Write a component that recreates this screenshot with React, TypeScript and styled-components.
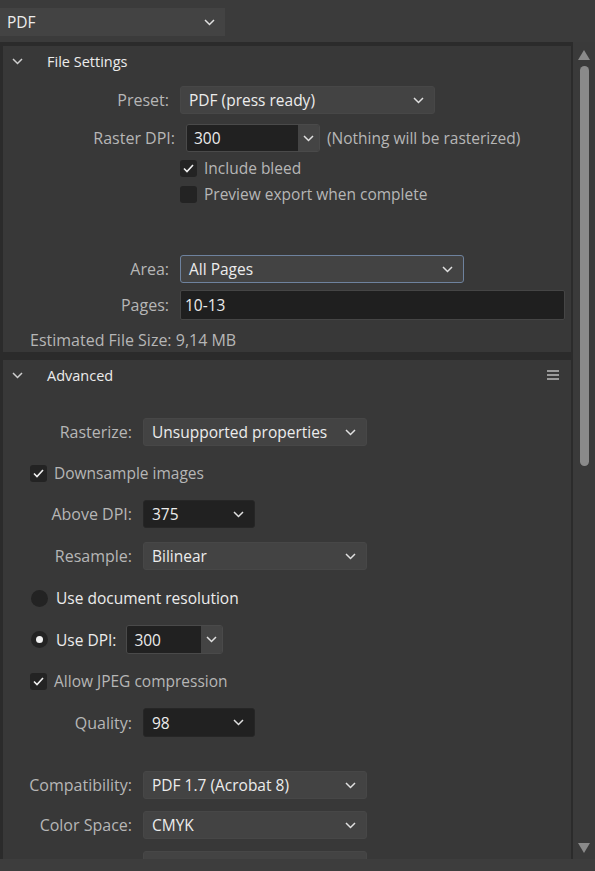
import React from "react";
import styled, { createGlobalStyle } from "styled-components";

const GlobalStyle = createGlobalStyle`
  html, body {
    margin: 0;
    padding: 0;
    background: #2b2b2b;
  }
  body {
    font-family: "Open Sans", "Noto Sans", sans-serif;
    color: #e4e4e4;
  }
`;

const Page = styled.div`
  width: 595px;
  height: 871px;
  display: flex;
  flex-direction: column;
  overflow: hidden;
  background: #2b2b2b;
`;

const TopBar = styled.div`
  height: 42px;
  flex: none;
  background: #3b3b3b;
  display: flex;
  align-items: center;
`;

const Body = styled.div`
  flex: 1;
  display: flex;
  min-height: 0;
`;

const Content = styled.div`
  flex: 1;
  display: flex;
  flex-direction: column;
  gap: 8px;
  padding: 4px 2px 0 3px;
  overflow: hidden;
`;

const Scrollbar = styled.div`
  width: 22px;
  flex: none;
  background: #3a3a3a;
  display: flex;
  flex-direction: column;
  align-items: center;
  padding: 8px 0 6px;
  box-sizing: border-box;
`;

const Thumb = styled.div`
  width: 9px;
  height: 400px;
  margin-top: 6px;
  border-radius: 5px;
  background: #8a8a8a;
`;

const Arrow = styled.div<{ $down?: boolean }>`
  width: 0;
  height: 0;
  border-left: 6px solid transparent;
  border-right: 6px solid transparent;
  ${(p) =>
    p.$down
      ? "border-top: 10px solid #8a8a8a;"
      : "border-bottom: 10px solid #8a8a8a;"}
  margin-top: ${(p) => (p.$down ? "auto" : "0")};
`;

const BottomStrip = styled.div`
  height: 12px;
  flex: none;
  background: #3d3d3d;
`;

const Panel = styled.section<{ $pb?: number }>`
  background: #383838;
  flex: none;
  display: flex;
  flex-direction: column;
  padding-bottom: ${(p) => p.$pb ?? 0}px;
`;

const Header = styled.div`
  height: 30px;
  display: flex;
  align-items: center;
  padding: 0 12px 0 9px;
  font-size: 14.5px;
  color: #ececec;
`;

const HeaderTitle = styled.span`
  margin-left: 24px;
  flex: 1;
`;

const Row = styled.div<{ $h: number; $mt: number }>`
  display: flex;
  align-items: center;
  height: ${(p) => p.$h}px;
  margin-top: ${(p) => p.$mt}px;
`;

const Label = styled.span<{ $w: number }>`
  width: ${(p) => p.$w}px;
  flex: none;
  text-align: right;
  padding-right: 11px;
  box-sizing: border-box;
  font-size: 16px;
  color: #b6b6b6;
`;

const Select = styled.div<{ $w: number; $dark?: boolean; $focus?: boolean }>`
  width: ${(p) => p.$w}px;
  height: 100%;
  box-sizing: border-box;
  display: flex;
  align-items: center;
  padding: 0 10px 0 8px;
  border-radius: 3px;
  background: ${(p) => (p.$dark ? "#212121" : "#434343")};
  border: 1px solid ${(p) => (p.$focus ? "#6e829e" : p.$dark ? "#262626" : "#474747")};
  font-size: 15.5px;
  color: #ececec;
  span {
    flex: 1;
  }
`;

const SplitSelect = styled.div<{ $w: number }>`
  width: ${(p) => p.$w}px;
  height: 100%;
  box-sizing: border-box;
  display: flex;
  border-radius: 3px;
  overflow: hidden;
  border: 1px solid #4a4a4a;
  font-size: 15.5px;
  color: #ececec;
`;

const SplitValue = styled.div`
  flex: 1;
  display: flex;
  align-items: center;
  padding-left: 7px;
  background: #212121;
`;

const SplitButton = styled.div`
  width: 21px;
  display: flex;
  align-items: center;
  justify-content: center;
  background: #444444;
`;

const Input = styled.div<{ $w: number }>`
  width: ${(p) => p.$w}px;
  height: 100%;
  box-sizing: border-box;
  display: flex;
  align-items: center;
  padding-left: 4px;
  border-radius: 2px;
  background: #1f1f1f;
  border: 1px solid #454545;
  font-size: 15.5px;
  color: #ececec;
`;

const Note = styled.span`
  margin-left: 7px;
  font-size: 15.5px;
  color: #b6b6b6;
`;

const Check = styled.div`
  width: 17px;
  height: 17px;
  flex: none;
  border-radius: 3px;
  background: #232323;
  display: flex;
  align-items: center;
  justify-content: center;
`;

const Radio = styled.div`
  width: 17px;
  height: 17px;
  flex: none;
  border-radius: 50%;
  background: #232323;
  display: flex;
  align-items: center;
  justify-content: center;
`;

const Dot = styled.div`
  width: 7px;
  height: 7px;
  border-radius: 50%;
  background: #f2f2f2;
`;

const OptionText = styled.span<{ $bright?: boolean }>`
  margin-left: ${(p) => (p.$bright ? 8 : 7)}px;
  font-size: 15.5px;
  color: ${(p) => (p.$bright ? "#ececec" : "#b6b6b6")};
`;

const Indent = styled.div<{ $w: number }>`
  width: ${(p) => p.$w}px;
  flex: none;
`;

const Info = styled.div`
  height: 20px;
  margin-top: 10px;
  padding-left: 27px;
  display: flex;
  align-items: center;
  font-size: 16px;
  color: #b6b6b6;
`;

const TopSelect = styled.div`
  width: 225px;
  height: 28px;
  background: #434343;
  display: flex;
  align-items: center;
  padding: 0 10px 0 7px;
  box-sizing: border-box;
  margin-top: 2px;
  font-size: 15.5px;
  color: #ececec;
  span {
    flex: 1;
  }
`;

const Chevron = ({ color = "#e0e0e0" }: { color?: string }) => (
  <svg width="11" height="7" viewBox="0 0 11 7">
    <polyline points="1,1 5.5,5.5 10,1" fill="none" stroke={color} strokeWidth="1.5" />
  </svg>
);

const Tick = () => (
  <svg width="11" height="9" viewBox="0 0 11 9">
    <polyline points="1,4.5 4,7.5 10,1" fill="none" stroke="#f0f0f0" strokeWidth="1.6" />
  </svg>
);

const Menu = () => (
  <svg width="12" height="12" viewBox="0 0 12 12">
    <rect x="0" y="1" width="12" height="2" fill="#9a9a9a" />
    <rect x="0" y="5" width="12" height="2" fill="#9a9a9a" />
    <rect x="0" y="9" width="12" height="2" fill="#9a9a9a" />
  </svg>
);

const FS = 177;
const AD = 140;

const App = () => {
  return (
    <Page>
      <GlobalStyle />
      <TopBar>
        <TopSelect>
          <span>PDF</span>
          <Chevron />
        </TopSelect>
      </TopBar>
      <Body>
        <Content>
          <Panel $pb={2}>
            <Header>
              <Chevron color="#cfcfcf" />
              <HeaderTitle>File Settings</HeaderTitle>
            </Header>
            <Row $h={28} $mt={10}>
              <Label $w={FS}>Preset:</Label>
              <Select $w={255}>
                <span>PDF (press ready)</span>
                <Chevron />
              </Select>
            </Row>
            <Row $h={28} $mt={10}>
              <Label $w={FS + 6}>Raster DPI:</Label>
              <SplitSelect $w={134}>
                <SplitValue>300</SplitValue>
                <SplitButton>
                  <Chevron />
                </SplitButton>
              </SplitSelect>
              <Note>(Nothing will be rasterized)</Note>
            </Row>
            <Row $h={20} $mt={6}>
              <Indent $w={FS} />
              <Check>
                <Tick />
              </Check>
              <OptionText>Include bleed</OptionText>
            </Row>
            <Row $h={20} $mt={6}>
              <Indent $w={FS} />
              <Check />
              <OptionText>Preview export when complete</OptionText>
            </Row>
            <Row $h={28} $mt={51}>
              <Label $w={FS}>Area:</Label>
              <Select $w={284} $focus>
                <span>All Pages</span>
                <Chevron />
              </Select>
            </Row>
            <Row $h={30} $mt={7}>
              <Label $w={FS}>Pages:</Label>
              <Input $w={385}>10-13</Input>
            </Row>
            <Info>Estimated File Size: 9,14 MB</Info>
          </Panel>
          <Panel>
            <Header>
              <Chevron color="#cfcfcf" />
              <HeaderTitle>Advanced</HeaderTitle>
              <Menu />
            </Header>
            <Row $h={28} $mt={28}>
              <Label $w={AD}>Rasterize:</Label>
              <Select $w={224}>
                <span>Unsupported properties</span>
                <Chevron />
              </Select>
            </Row>
            <Row $h={20} $mt={17}>
              <Indent $w={27} />
              <Check>
                <Tick />
              </Check>
              <OptionText>Downsample images</OptionText>
            </Row>
            <Row $h={28} $mt={17}>
              <Label $w={AD}>Above DPI:</Label>
              <Select $w={112} $dark>
                <span>375</span>
                <Chevron />
              </Select>
            </Row>
            <Row $h={28} $mt={14}>
              <Label $w={AD}>Resample:</Label>
              <Select $w={224}>
                <span>Bilinear</span>
                <Chevron />
              </Select>
            </Row>
            <Row $h={20} $mt={18}>
              <Indent $w={28} />
              <Radio />
              <OptionText $bright>Use document resolution</OptionText>
            </Row>
            <Row $h={29} $mt={17}>
              <Indent $w={28} />
              <Radio>
                <Dot />
              </Radio>
              <OptionText $bright>Use DPI:</OptionText>
              <Indent $w={10} />
              <SplitSelect $w={97}>
                <SplitValue>300</SplitValue>
                <SplitButton>
                  <Chevron />
                </SplitButton>
              </SplitSelect>
            </Row>
            <Row $h={20} $mt={17}>
              <Indent $w={27} />
              <Check>
                <Tick />
              </Check>
              <OptionText>Allow JPEG compression</OptionText>
            </Row>
            <Row $h={29} $mt={17}>
              <Label $w={AD}>Quality:</Label>
              <Select $w={112} $dark>
                <span>98</span>
                <Chevron />
              </Select>
            </Row>
            <Row $h={28} $mt={34}>
              <Label $w={AD}>Compatibility:</Label>
              <Select $w={224}>
                <span>PDF 1.7 (Acrobat 8)</span>
                <Chevron />
              </Select>
            </Row>
            <Row $h={28} $mt={12}>
              <Label $w={AD}>Color Space:</Label>
              <Select $w={224}>
                <span>CMYK</span>
                <Chevron />
              </Select>
            </Row>
            <Row $h={28} $mt={12}>
              <Label $w={AD}>ICC Profile:</Label>
              <Select $w={224}>
                <span>Use document profile</span>
                <Chevron />
              </Select>
            </Row>
          </Panel>
        </Content>
        <Scrollbar>
          <Arrow />
          <Thumb />
          <Arrow $down />
        </Scrollbar>
      </Body>
      <BottomStrip />
    </Page>
  );
};

export default App;
